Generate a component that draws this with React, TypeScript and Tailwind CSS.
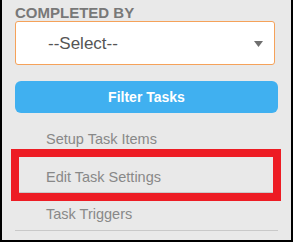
import React from "react";

export default function App() {
  const items = ["Setup Task Items", "Edit Task Settings", "Task Triggers"];
  return (
    <div
      className="relative w-[293px] h-[242px] bg-[#e9e9e9] border-l-2 border-r-2 border-b-2 border-black overflow-hidden"
      style={{ fontFamily: '"Liberation Sans", Arial, sans-serif' }}
    >
      <div className="pl-[13px] pt-[4px] w-[278px]">
        <div className="text-[15px] leading-[17px] font-bold text-[#787878] tracking-[0px]">
          COMPLETED BY
        </div>
        <div className="relative w-[260px] h-[44px] bg-white border border-[#f5a25a] rounded-[3px] flex items-center">
          <span className="pl-[32px] text-[17px] leading-[20px] text-[#555] pt-[1px]">--Select--</span>
          <svg
            className="absolute right-[11px] top-[19px]"
            width="9"
            height="6"
            viewBox="0 0 9 6"
          >
            <polygon points="0,0 9,0 4.5,6" fill="#6f6f6f" />
          </svg>
        </div>
        <button className="mt-[16px] w-[263px] h-[32px] bg-[#40b0f0] rounded-[6px] text-white font-bold text-[14px] leading-[17px] flex items-center justify-center">
          Filter Tasks
        </button>
        <div className="mt-[5px] w-[263px]">
          {items.map((t) => (
            <div
              key={t}
              className="pl-[31px] pt-[13px] pb-[6.5px] leading-[17px] text-[14.5px] text-[#888] border-b border-[#c9c9c9]"
            >
              {t}
            </div>
          ))}
        </div>
      </div>
      <div className="absolute left-[9px] top-[149px] w-[270px] h-[52px] border-[8px] border-[#ed1c24]" />
    </div>
  );
}
